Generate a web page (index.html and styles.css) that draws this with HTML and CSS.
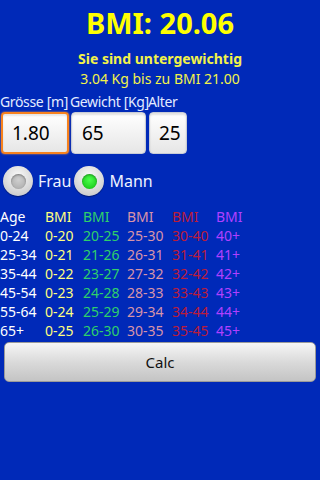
FILE: index.html
```html
<!doctype html>
<html lang="de">
	<head>
		<meta charset="UTF-8">
		<title>BMI</title>
		<link rel="stylesheet" href="styles.css">
	</head>
	<body>
		<div class="app">
			<h1 class="result">BMI: 20.06</h1>
			<p class="state">Sie sind untergewichtig</p>
			<p class="diff">3.04 Kg bis zu BMI 21.00</p>

			<div class="fields">
				<label class="field f-size">
					<span>Grösse [m]</span>
					<input type="text" value="1.80" class="focus">
				</label>
				<label class="field f-weight">
					<span>Gewicht [Kg]</span>
					<input type="text" value="65">
				</label>
				<label class="field f-age">
					<span>Alter</span>
					<input type="text" value="25">
				</label>
			</div>

			<div class="gender">
				<span class="radio"><i></i></span><span class="rlabel">Frau</span>
				<span class="radio on"><i></i></span><span class="rlabel">Mann</span>
			</div>

			<div class="table">
				<span class="c0">Age</span><span class="c1">BMI</span><span class="c2">BMI</span><span class="c3">BMI</span><span class="c4">BMI</span><span class="c5">BMI</span>
				<span class="c0">0-24</span><span class="c1">0-20</span><span class="c2">20-25</span><span class="c3">25-30</span><span class="c4">30-40</span><span class="c5">40+</span>
				<span class="c0">25-34</span><span class="c1">0-21</span><span class="c2">21-26</span><span class="c3">26-31</span><span class="c4">31-41</span><span class="c5">41+</span>
				<span class="c0">35-44</span><span class="c1">0-22</span><span class="c2">23-27</span><span class="c3">27-32</span><span class="c4">32-42</span><span class="c5">42+</span>
				<span class="c0">45-54</span><span class="c1">0-23</span><span class="c2">24-28</span><span class="c3">28-33</span><span class="c4">33-43</span><span class="c5">43+</span>
				<span class="c0">55-64</span><span class="c1">0-24</span><span class="c2">25-29</span><span class="c3">29-34</span><span class="c4">34-44</span><span class="c5">44+</span>
				<span class="c0">65+</span><span class="c1">0-25</span><span class="c2">26-30</span><span class="c3">30-35</span><span class="c4">35-45</span><span class="c5">45+</span>
			</div>

			<button class="calc">Calc</button>
		</div>
	</body>
</html>
```

FILE: styles.css
```css
html, body{
	margin: 0;
	padding: 0;
	height: 100%;
	background-color: #0029b8;
}
body{
	font-family: "Noto Sans", "DejaVu Sans", sans-serif;
	color: #fff;
}
.app{
	display: flex;
	flex-direction: column;
}
.result{
	margin: 5px 0 0;
	font-size: 29px;
	line-height: 36px;
	font-weight: bold;
	text-align: center;
	color: #ffff00;
}
.state{
	margin: 8px 0 0;
	font-size: 14px;
	line-height: 19px;
	font-weight: bold;
	text-align: center;
	color: #f2f24a;
}
.diff{
	margin: 1px 0 0;
	font-size: 14px;
	line-height: 19px;
	text-align: center;
	color: #f2f24a;
}
.fields{
	display: flex;
	margin-top: 5px;
}
.field{
	display: flex;
	flex-direction: column;
}
.field span{
	font-size: 14px;
	line-height: 18px;
	letter-spacing: -0.35px;
	color: #e4ecff;
	white-space: nowrap;
}
.field input{
	box-sizing: border-box;
	height: 42px;
	margin: 1px 1px 0;
	padding: 0 0 0 10px;
	border: 1px solid #c8ccd6;
	border-radius: 4px;
	font-family: inherit;
	font-size: 19px;
	color: #000;
	background: linear-gradient(#ffffff, #e6e6e6);
	box-shadow: inset 0 2px 2px rgba(0,0,0,.12);
}
.f-size{
	width: 70px;
}
.f-weight{
	width: 77px;
}
.f-age{
	width: 40px;
	margin-left: 1px;
}
.f-age input{
	padding-left: 9px;
}
.field input.focus{
	border: 2px solid #f7821e;
	box-shadow: 0 0 2px #ffa040, inset 0 2px 2px rgba(0,0,0,.1);
	padding-left: 9px;
}
.gender{
	display: flex;
	align-items: center;
	height: 34px;
	margin-top: 10px;
	padding-left: 3px;
}
.radio{
	display: flex;
	align-items: center;
	justify-content: center;
	width: 30px;
	height: 30px;
	border-radius: 50%;
	background: radial-gradient(circle at 50% 35%, #fafafa, #d2d2d2 70%, #bdbdbd);
	box-shadow: 0 1px 1px rgba(0,0,0,.4);
}
.radio i{
	width: 15px;
	height: 15px;
	border-radius: 50%;
	background: radial-gradient(circle at 50% 40%, #cfcfcf, #a8a8a8);
	box-shadow: inset 0 1px 2px rgba(0,0,0,.35);
}
.radio.on i{
	background: radial-gradient(circle at 50% 40%, #4cff4c, #10c010);
}
.rlabel{
	margin: 0 3px 0 5px;
	font-size: 16px;
	color: #eef2ff;
}
.table{
	display: grid;
	grid-template-columns: 45px 38px 44px 45px 44px auto;
	margin-top: 9px;
	font-size: 14px;
	line-height: 19px;
}
.c0{
	color: #ffffff;
}
.c1{
	color: #ffff80;
}
.c2{
	color: #2fd06a;
}
.c3{
	color: #d894a8;
}
.c4{
	color: #bb1c3a;
}
.c5{
	color: #b040ff;
}
.calc{
	height: 40px;
	margin: 2px 4px 0;
	border: 1px solid #9a9a9a;
	border-radius: 5px;
	font-family: inherit;
	font-size: 15px;
	color: #111;
	background: linear-gradient(#f6f6f6, #dadada 50%, #c4c4c4);
}
```
